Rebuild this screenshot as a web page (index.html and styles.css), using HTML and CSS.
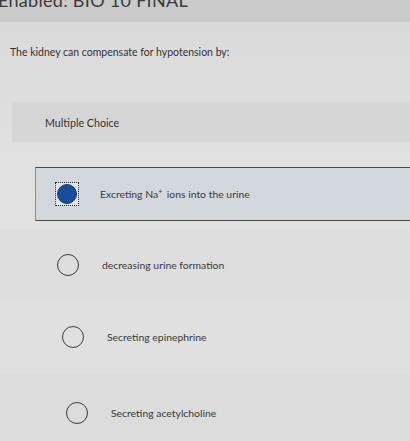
FILE: index.html
```html
<!DOCTYPE html>
<html>
<head>
<meta charset="utf-8">
<link rel="stylesheet" href="styles.css">
</head>
<body>
<div class="header"><span class="header-text">Enabled: BIO 10 FINAL</span></div>
<main class="main">
  <p class="question">The kidney can compensate for hypotension by:</p>
  <div class="mc-box">Multiple Choice</div>
  <div class="options">
    <div class="option selected">
      <span class="radio-focus"><span class="radio filled"></span></span>
      <span class="label">Excreting Na<sup>+</sup> ions into the urine</span>
    </div>
    <div class="option plain o2">
      <span class="radio"></span>
      <span class="label">decreasing urine formation</span>
    </div>
    <div class="option plain o3">
      <span class="radio"></span>
      <span class="label">Secreting epinephrine</span>
    </div>
    <div class="option plain o4">
      <span class="radio"></span>
      <span class="label">Secreting acetylcholine</span>
    </div>
  </div>
</main>
</body>
</html>
```
FILE: styles.css
```css
html, body {
  margin: 0;
  padding: 0;
  height: 100%;
  overflow: hidden;
}
body {
  background: #dcdcdc;
  font-family: Lato, "Open Sans", "Liberation Sans", sans-serif;
  color: #2b2b2b;
}
.header {
  height: 22px;
  background: #cacaca;
  overflow: hidden;
  display: flex;
  align-items: flex-start;
}
.header-text {
  display: block;
  font-size: 18px;
  line-height: 18px;
  margin-top: -9px;
  margin-left: -2px;
  color: #3a3a3a;
  letter-spacing: 0.3px;
}
.main {
  background: linear-gradient(#dadada, #e2e2e2 40%, #dedede);
  display: flex;
  flex-direction: column;
  height: 419px;
}
.main > * {
  flex: none;
}
.question {
  margin: 23px 0 0 10px;
  font-size: 10.5px;
  line-height: 14px;
  color: #333;
}
.mc-box {
  margin: 43px 0 0 12px;
  height: 40px;
  background: #d6d6d6;
  display: flex;
  align-items: center;
  padding-left: 33px;
  font-size: 10.7px;
  color: #333;
}
.options {
  display: flex;
  flex-direction: column;
  margin-top: 25px;
}
.option {
  flex: none;
  display: flex;
  align-items: center;
  font-size: 10.4px;
  color: #383838;
}
.selected {
  margin-left: 35px;
  height: 52px;
  background: #d2d8dc;
  border-top: 1.5px solid #4a4a4a;
  border-bottom: 1.5px solid #4a4a4a;
  border-left: 1px solid #8a8a8a;
  padding-left: 19px;
  gap: 21px;
}
.radio-focus {
  width: 22px;
  height: 22px;
  border: 1px dotted #222;
  display: flex;
  align-items: center;
  justify-content: center;
  background: #e6e6e6;
}
.radio {
  width: 20px;
  height: 20px;
  border-radius: 50%;
  border: 1.3px solid #3c3c3c;
  box-sizing: border-box;
  flex: none;
}
.radio.filled {
  width: 20px;
  height: 20px;
  background: #174d9b;
  border: 1px solid #123e80;
}
.selected .label sup {
  font-size: 7px;
  vertical-align: 4px;
  line-height: 0;
  margin-right: 2px;
}
.plain {
  gap: 23px;
}
.o2 {
  margin-top: 8px;
  height: 72px;
  padding-left: 57px;
  background: #dedede;
}
.o3 {
  height: 72px;
  padding-left: 62px;
  background: #e0e0e0;
}
.o4 {
  height: 80px;
  padding-left: 66px;
  background: #dcdcdc;
}
.o2 .radio, .o3 .radio, .o4 .radio {
  width: 22px;
  height: 22px;
}
```
